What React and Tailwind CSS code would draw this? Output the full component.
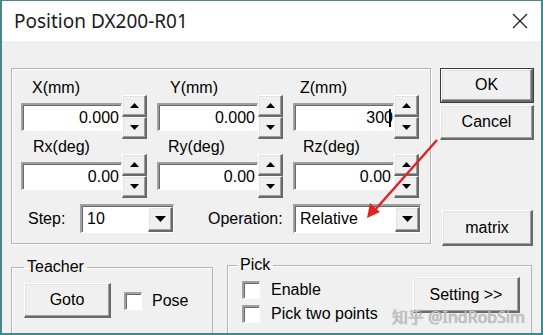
import React from "react";

const raised =
  "bg-[#f0f0f0] border-t border-l border-t-white border-l-white border-b-2 border-r-2 border-b-[#696969] border-r-[#696969] shadow-[inset_-1px_-1px_0_#a0a0a0,inset_1px_1px_0_#e3e3e3]";
const sunken =
  "bg-white border-t-2 border-l-2 border-t-[#a0a0a0] border-l-[#a0a0a0] border-b border-r border-b-white border-r-white shadow-[inset_1px_1px_0_#696969]";

function Tri({ up, w = 9, h = 5 }) {
  return (
    <svg width={w} height={h} viewBox={`0 0 ${w} ${h}`}>
      {up ? (
        <polygon points={`0,${h} ${w},${h} ${w / 2},0`} fill="#000" />
      ) : (
        <polygon points={`0,0 ${w},0 ${w / 2},${h}`} fill="#000" />
      )}
    </svg>
  );
}

function Spinner() {
  return (
    <div className="flex flex-col w-[25px] h-[44px]">
      <div className={`${raised} h-[22px] flex items-center justify-center`}>
        <Tri up w={9} h={5} />
      </div>
      <div className={`${raised} h-[22px] flex items-center justify-center`}>
        <Tri w={9} h={5} />
      </div>
    </div>
  );
}

function Field({ label, value, lpad, caret }) {
  return (
    <div className="w-[136px]">
      <div className={`h-[15px] leading-[15px] text-[16px] ${lpad}`}>{label}</div>
      <div className="flex items-center">
        <div className={`${sunken} w-[101px] h-[28px] flex items-center justify-end pr-[2px] text-[16px]`}>
          <span>{value}</span>
          {caret && <span className="inline-block w-[2px] h-[18px] bg-black -ml-[4px]" />}
        </div>
        <Spinner />
      </div>
    </div>
  );
}

function Combo({ w, text }) {
  return (
    <div className={`${sunken} ${w} h-[29px] flex items-center justify-between`}>
      <span className="pl-[5px] text-[16px]">{text}</span>
      <div className={`${raised} w-[25px] h-[25px] flex items-center justify-center`}>
        <Tri w={11} h={6} />
      </div>
    </div>
  );
}

function Check({ label, gap }) {
  return (
    <div className="flex items-center h-[18px]">
      <div className={`${sunken} w-[18px] h-[18px]`} />
      <span className={`${gap} text-[16px]`}>{label}</span>
    </div>
  );
}

export default function App() {
  return (
    <div
      className="w-[543px] h-[335px] bg-[#4b8686] pt-[1px] px-[2px] pb-[2px] flex flex-col overflow-hidden text-black"
      style={{ fontFamily: '"Liberation Sans", Arial, sans-serif' }}
    >
      <div className="h-[40px] bg-white flex items-center justify-between pl-[12px] pr-[13px] shrink-0">
        <span
          className="text-[19px] text-[#1a1a1a]"
          style={{ fontFamily: '"Noto Sans", "Open Sans", sans-serif' }}
        >
          Position DX200-R01
        </span>
        <svg width="16" height="16" viewBox="0 0 16 16">
          <path d="M1 1 L15 15 M15 1 L1 15" stroke="#222" strokeWidth="1.3" />
        </svg>
      </div>

      <div className="flex-1 bg-[#f0f0f0] relative overflow-hidden">
        <div className="flex pt-[27px] pl-[9px]">
          <div className="w-[420px] h-[176px] border border-[#b4b4b4] shadow-[inset_1px_1px_0_#fff,1px_1px_0_#fff] pt-[11px] pl-[9px]">
            <div className="flex">
              <Field label="X(mm)" value="0.000" lpad="pl-[11px]" />
              <Field label="Y(mm)" value="0.000" lpad="pl-[13px]" />
              <Field label="Z(mm)" value="300" lpad="pl-[7px]" caret />
            </div>
            <div className="flex">
              <Field label="Rx(deg)" value="0.00" lpad="pl-[12px]" />
              <Field label="Ry(deg)" value="0.00" lpad="pl-[11px]" />
              <Field label="Rz(deg)" value="0.00" lpad="pl-[10px]" />
            </div>
            <div className="flex items-center mt-[6px]">
              <span className="w-[59px] pl-[7px] text-[16px]">Step:</span>
              <Combo w="w-[94px]" text="10" />
              <span className="ml-[34px] w-[85px] text-[16px]">Operation:</span>
              <Combo w="w-[128px]" text="Relative" />
            </div>
          </div>

          <div className="ml-[9px] w-[94px] flex flex-col">
            <div className="border border-[#3c3c3c] h-[35px] flex">
              <div className={`${raised} flex-1 flex items-center justify-center text-[16px]`}>OK</div>
            </div>
            <div className={`${raised} mt-[2px] h-[35px] flex items-center justify-center text-[16px]`}>Cancel</div>
            <div className={`${raised} mt-[70px] ml-[2px] w-[91px] h-[36px] flex items-center justify-center text-[16px]`}>
              matrix
            </div>
          </div>
        </div>

        <div className="flex pl-[9px] mt-[10px] items-start">
          <fieldset className="mt-[2px] w-[202px] h-[120px] border border-[#b4b4b4] shadow-[inset_1px_1px_0_#fff]">
            <legend className="ml-[12px] px-[3px] text-[16px] leading-[18px]">Teacher</legend>
            <div className="flex items-center pl-[12px] mt-[7px]">
              <div className={`${raised} w-[87px] h-[35px] flex items-center justify-center text-[16px]`}>Goto</div>
              <div className="ml-[13px]">
                <Check label="Pose" gap="ml-[10px]" />
              </div>
            </div>
          </fieldset>

          <fieldset className="ml-[14px] w-[305px] h-[120px] border border-[#b4b4b4] shadow-[inset_1px_1px_0_#fff]">
            <legend className="ml-[9px] px-[3px] text-[16px] leading-[18px]">Pick</legend>
            <div className="flex">
              <div className="pl-[14px] pt-[7px] flex flex-col gap-[6px]">
                <Check label="Enable" gap="ml-[11px]" />
                <Check label="Pick two points" gap="ml-[11px]" />
              </div>
              <div className={`${raised} ml-auto mr-[11px] mt-[3px] w-[107px] h-[36px] flex items-center justify-center text-[16px]`}>
                Setting &gt;&gt;
              </div>
            </div>
          </fieldset>
        </div>

        <div
          className="absolute left-[390px] top-[264px] text-[16px] text-[#c4c4c4] whitespace-nowrap"
          style={{ fontFamily: '"Noto Sans", "Noto Sans CJK SC", sans-serif', textShadow: "0 0 1px #8a8a8a" }}
        >
          知乎 @IndRobSim
        </div>

        <svg className="absolute left-0 top-0 pointer-events-none" width="539" height="292">
          <line x1="435" y1="99" x2="372" y2="170" stroke="#e02424" strokeWidth="2.5" />
          <polygon points="365,177 368,162 378,171" fill="#e02424" />
        </svg>
      </div>
    </div>
  );
}
